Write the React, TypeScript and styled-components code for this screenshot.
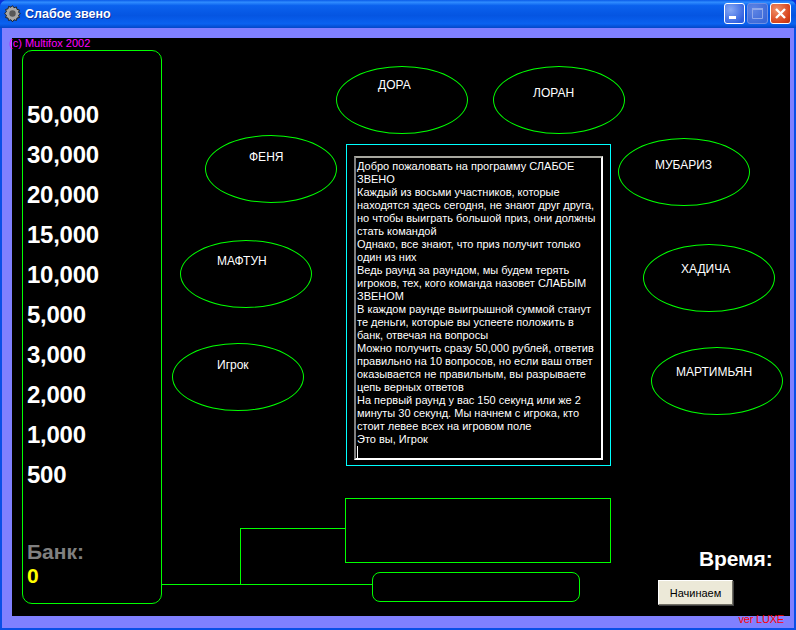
import React from "react";
import styled, { createGlobalStyle } from "styled-components";

const Global = createGlobalStyle`
  html, body { margin: 0; padding: 0; background: #0831d9; }
  body { width: 796px; height: 630px; overflow: hidden; font-family: "Liberation Sans", Arial, sans-serif; }
  * { box-sizing: border-box; }
`;

const Win = styled.div`
  width: 796px; height: 630px; display: flex; flex-direction: column;
  background: #0a4fe6; border-radius: 7px 7px 0 0; overflow: hidden;
`;
const TitleBar = styled.div`
  height: 28px; flex: none; display: flex; align-items: center; padding: 0 5px 1px 4px; gap: 2px;
  background: linear-gradient(180deg, #0a5be8 0%, #2f8cff 8%, #0b62ee 20%, #0555e2 55%, #0a62f0 85%, #0346c8 100%);
`;
const TitleText = styled.span`
  color: #fff; font: bold 12.5px "Liberation Sans", sans-serif; text-shadow: 1px 1px 0 #0b2f9c; flex: 1; padding-top: 1px; margin-left: 2px;
`;
const WinBtn = styled.div<{ $kind: "min" | "max" | "close" }>`
  width: 21px; height: 21px; border-radius: 3px; border: 1px solid #fff;
  display: flex; align-items: center; justify-content: center;
  background: ${p => p.$kind === "close"
    ? "radial-gradient(circle at 30% 30%, #f0906a, #d8431c 70%, #b8300f)"
    : p.$kind === "max"
      ? "radial-gradient(circle at 30% 30%, #5f85e4, #3b68d8 80%)"
      : "radial-gradient(circle at 30% 30%, #86a8f4, #2f5fe0 80%)"};
  ${p => p.$kind === "max" ? "border-color: #6f90e4;" : ""}
`;
const Client = styled.div`
  flex: 1; display: flex; margin: 0 2px 2px 2px; padding: 10px 4px 12px 10px; background: #8080ff; min-height: 0;
`;
const Canvas = styled.div`
  position: relative; flex: 1; background: #000; display: flex; padding-left: 10px;
`;
const Copy = styled.div`
  position: absolute; left: -3px; top: -1px; color: #ff00ff; font-size: 11px; line-height: 13px;
`;
const Ladder = styled.div`
  flex: none; margin-top: 12px; width: 140px; height: 554px;
  border: 1px solid #00ff00; border-radius: 10px; padding: 50px 0 0 4px;
  display: flex; flex-direction: column;
`;
const Sum = styled.div`
  height: 40px; color: #fff; font: bold 24px/27px "Liberation Sans", sans-serif; letter-spacing: -0.25px;
`;
const BankLabel = styled.div`
  margin-top: auto; color: #808080; font: bold 21px/24px "Liberation Sans", sans-serif;
`;
const BankValue = styled.div`
  color: #ffff00; font: bold 21px/24px "Liberation Sans", sans-serif; margin-bottom: 15px;
`;
const Stage = styled.div`
  position: relative; flex: 1;
`;
const Player = styled.div<{ $x: number; $y: number }>`
  position: absolute; left: ${p => p.$x - 162}px; top: ${p => p.$y - 38}px;
  width: 132px; height: 68px; border: 1px solid #00ff00; border-radius: 50%;
`;
const PlayerName = styled.span<{ $dx: number; $dy: number }>`
  position: absolute; left: ${p => p.$dx}px; top: ${p => p.$dy}px; color: #fff;
  font-size: 12px; line-height: 13px; white-space: nowrap;
`;
const CenterColumn = styled.div`
  position: absolute; left: 183px; top: 106px; width: 266px;
  display: flex; flex-direction: column; align-items: flex-start;
`;
const InfoFrame = styled.div`
  width: 265px; height: 322px; margin-left: 1px;
  border: 1px solid #00ffff; padding: 11px 7px 5px 7px;
`;
const InfoBox = styled.div`
  width: 100%; height: 100%; padding: 2px 1px 0 1px; background: #000; color: #fff;
  border: 2px solid; border-color: #a8a8a0 #fff #fff #808080;
  font-size: 11px; line-height: 13px; overflow: hidden;
`;
const InfoLine = styled.div`white-space: nowrap;`;
const Caret = styled.div`width: 1px; height: 13px; background: #fff;`;
const Question = styled.div`
  width: 266px; height: 65px; margin-top: 32px; border: 1px solid #00ff00;
`;
const Answer = styled.div`
  width: 208px; height: 30px; margin: 9px 0 0 27px; border: 1px solid #00ff00; border-radius: 8px;
`;
const HLine = styled.div<{ $x: number; $y: number; $w: number }>`
  position: absolute; left: ${p => p.$x}px; top: ${p => p.$y}px; width: ${p => p.$w}px; height: 1px; background: #00ff00;
`;
const VLine = styled.div<{ $x: number; $y: number; $h: number }>`
  position: absolute; left: ${p => p.$x}px; top: ${p => p.$y}px; width: 1px; height: ${p => p.$h}px; background: #00ff00;
`;
const Controls = styled.div`
  position: absolute; left: 496px; top: 509px; display: flex; flex-direction: column; align-items: flex-start; gap: 9px;
`;
const TimeLabel = styled.div`
  margin-left: 41px; color: #fff; font: bold 21px/24px "Liberation Sans", sans-serif; letter-spacing: -0.1px;
`;
const StartButton = styled.button`
  width: 75px; height: 25px; padding: 0;
  background: #ece9d8; color: #000; font: 11px "Liberation Sans", sans-serif;
  border: 1px solid; border-color: #fff #716f64 #716f64 #fff; box-shadow: 1px 1px 0 #404040;
`;
const Ver = styled.div`
  position: absolute; right: 6px; bottom: -10px; font-size: 11px; line-height: 13px; color: #ff0000; letter-spacing: -0.2px;
`;

const sums = ["50,000","30,000","20,000","15,000","10,000","5,000","3,000","2,000","1,000","500"];
const players = [
  { n: "ДОРА", x: 336, y: 66, dx: 41, dy: 12 },
  { n: "ЛОРАН", x: 493, y: 66, dx: 39, dy: 20 },
  { n: "ФЕНЯ", x: 205, y: 135, dx: 43, dy: 15 },
  { n: "МУБАРИЗ", x: 618, y: 138, dx: 36, dy: 20 },
  { n: "МАФТУН", x: 180, y: 240, dx: 36, dy: 14 },
  { n: "ХАДИЧА", x: 643, y: 244, dx: 37, dy: 18 },
  { n: "Игрок", x: 172, y: 343, dx: 44, dy: 15 },
  { n: "МАРТИМЬЯН", x: 651, y: 347, dx: 24, dy: 18 },
];
const lines = [
  "Добро пожаловать на программу СЛАБОЕ","ЗВЕНО",
  "Каждый из восьми участников, которые",
  "находятся здесь сегодня, не знают друг друга,",
  "но чтобы выиграть большой приз, они должны",
  "стать командой",
  "Однако, все знают, что приз получит только",
  "один из них",
  "Ведь раунд за раундом, мы будем терять",
  "игроков, тех, кого команда назовет СЛАБЫМ",
  "ЗВЕНОМ",
  "В каждом раунде выигрышной суммой станут",
  "те деньги, которые вы успеете положить в",
  "банк, отвечая на вопросы",
  "Можно получить сразу 50,000 рублей, ответив",
  "правильно на 10 вопросов, но если ваш ответ",
  "оказывается не правильным, вы разрываете",
  "цепь верных ответов",
  "На первый раунд у вас 150 секунд или же 2",
  "минуты 30 секунд. Мы начнем с игрока, кто",
  "стоит левее всех на игровом поле",
  "Это вы, Игрок",
];

const Gear = () => (
  <svg width="17" height="17" viewBox="0 0 16 16">
    <path d="M8 .6l1.4 2 2.3-.8.5 2.3 2.3.6-.8 2.2L15.4 8l-1.7 1.6.8 2.2-2.3.5-.5 2.3-2.3-.7L8 15.8l-1.4-1.9-2.3.7-.5-2.3-2.3-.5.8-2.2L.6 8l1.7-1.6-.8-2.2 2.3-.6.5-2.3 2.3.8z" fill="#a8a8a8" stroke="#202020" strokeWidth=".9"/>
    <circle cx="8" cy="8" r="3" fill="#585858"/>
  </svg>
);

export default function App() {
  return (
    <Win>
      <Global />
      <TitleBar>
        <Gear />
        <TitleText>Слабое звено</TitleText>
        <WinBtn $kind="min">
          <svg width="19" height="19" viewBox="0 0 19 19"><rect x="4" y="12" width="7" height="3" fill="#fff"/></svg>
        </WinBtn>
        <WinBtn $kind="max">
          <svg width="19" height="19" viewBox="0 0 19 19"><path d="M4.5 4.5h10v10h-10z" fill="none" stroke="#8fa8ea"/><rect x="4" y="4" width="11" height="2" fill="#8fa8ea"/></svg>
        </WinBtn>
        <WinBtn $kind="close">
          <svg width="19" height="19" viewBox="0 0 19 19"><path d="M5 5l9 9M14 5l-9 9" stroke="#fff" strokeWidth="2.4"/></svg>
        </WinBtn>
      </TitleBar>
      <Client>
        <Canvas>
          <Copy>(c) Multifox 2002</Copy>
          <Ladder>
            {sums.map(s => <Sum key={s}>{s}</Sum>)}
            <BankLabel>Банк:</BankLabel>
            <BankValue>0</BankValue>
          </Ladder>
          <Stage>
            {players.map(p => (
              <Player key={p.n} $x={p.x} $y={p.y}>
                <PlayerName $dx={p.dx} $dy={p.dy}>{p.n}</PlayerName>
              </Player>
            ))}
            <CenterColumn>
              <InfoFrame>
                <InfoBox>
                  {lines.map((l, i) => <InfoLine key={i}>{l}</InfoLine>)}
                  <Caret />
                </InfoBox>
              </InfoFrame>
              <Question />
              <Answer />
            </CenterColumn>
            <HLine $x={0} $y={546} $w={210} />
            <VLine $x={78} $y={490} $h={56} />
            <HLine $x={78} $y={490} $w={105} />
            <Controls>
              <TimeLabel>Время:</TimeLabel>
              <StartButton>Начинаем</StartButton>
            </Controls>
          </Stage>
          <Ver>ver LUXE</Ver>
        </Canvas>
      </Client>
    </Win>
  );
}
